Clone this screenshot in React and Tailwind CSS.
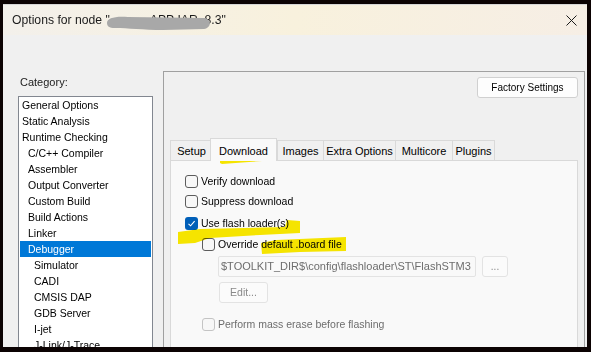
import React from "react";

const categories = [
  { label: "General Options", level: 0 },
  { label: "Static Analysis", level: 0 },
  { label: "Runtime Checking", level: 0 },
  { label: "C/C++ Compiler", level: 1 },
  { label: "Assembler", level: 1 },
  { label: "Output Converter", level: 1 },
  { label: "Custom Build", level: 1 },
  { label: "Build Actions", level: 1 },
  { label: "Linker", level: 1 },
  { label: "Debugger", level: 1, selected: true },
  { label: "Simulator", level: 2 },
  { label: "CADI", level: 2 },
  { label: "CMSIS DAP", level: 2 },
  { label: "GDB Server", level: 2 },
  { label: "I-jet", level: 2 },
  { label: "J-Link/J-Trace", level: 2 },
];

const tabs = [
  { label: "Setup", w: "w-[42px]" },
  { label: "Download", w: "w-[67px]", selected: true },
  { label: "Images", w: "w-[46px]" },
  { label: "Extra Options", w: "w-[72px]" },
  { label: "Multicore", w: "w-[57px]" },
  { label: "Plugins", w: "w-[43px]" },
];

const indent = ["pl-[3px]", "pl-[9px]", "pl-[15px]"];

const Checkbox = ({ checked, disabled }) => {
  if (checked) {
    return (
      <span className="w-[13px] h-[13px] rounded-[3px] bg-[#005fb8] flex items-center justify-center shrink-0">
        <svg width="9" height="9" viewBox="0 0 9 9">
          <path d="M1.5 4.8 L3.6 6.8 L7.6 2.2" fill="none" stroke="#fff" strokeWidth="1.1" />
        </svg>
      </span>
    );
  }
  return (
    <span
      className={
        "w-[13px] h-[13px] rounded-[3px] border bg-[#f7f7f7] shrink-0 " +
        (disabled ? "border-[#c4c4c4]" : "border-[#5c5c5c]")
      }
    />
  );
};

const Option = ({ label, checked, disabled, className = "" }) => (
  <div className={"flex items-center gap-[3px] h-[13px] " + className}>
    <Checkbox checked={checked} disabled={disabled} />
    <span className={"text-[10.5px] leading-[13px] " + (disabled ? "text-[#6d6d6d]" : "text-black")}>{label}</span>
  </div>
);

// highlighter strokes drawn over the screenshot
const Marks = () => (
  <svg
    className="absolute inset-0 pointer-events-none mix-blend-multiply"
    width="591"
    height="352"
    viewBox="0 0 591 352"
  >
    <g fill="#fbea00">
      <polygon points="220,149 223,148 224,156 262,152 270,149 270,159 262,161 222,164 220,163" />
      <polygon points="178,232 200,229 285,227 287,220 300,221 300,233 260,235 210,238 195,243 178,244" />
      <polygon points="261,243 276,240 346,237 346,251 300,252 262,254" />
    </g>
  </svg>
);

export default function App() {
  return (
    <div className="relative w-[591px] h-[352px] bg-[#0c0303] pt-[4px] pl-[3px] pr-[4px] pb-[5px] overflow-hidden" style={{ fontFamily: '"Liberation Sans", Arial, sans-serif' }}>
      <div className="w-full h-full flex flex-col bg-[#f0f0f0] overflow-hidden border-t border-[#d6d6d6]">
        {/* title bar */}
        <div className="relative h-[30px] shrink-0 flex items-center pl-[9px] pr-[6px] bg-gradient-to-r from-[#f3f0eb] via-[#f8f1dd] to-[#f6eee5]">
          <span className="text-[12.2px] text-[#1b1b1b] whitespace-nowrap">
            Options for node &quot;<span className="inline-block w-[40px]" />APP IAR_8.3&quot;
          </span>
          <svg className="absolute left-[100px] top-[9px]" width="112" height="18" viewBox="100 13 112 18">
            <path
              d="M104,22 C104,17 112,15 125,16 L200,17 C209,17 209,27 201,28 L160,29 C140,29 125,27 112,27 C106,27 104,25 104,22 Z"
              fill="#a8a8a8"
            />
          </svg>
          <svg className="ml-auto mr-[4px]" width="11" height="11" viewBox="0 0 11 11">
            <path d="M0.5 0.5 L10.5 10.5 M10.5 0.5 L0.5 10.5" stroke="#1a1a1a" strokeWidth="1" />
          </svg>
        </div>

        {/* body */}
        <div className="flex-1 flex items-start pl-[15px] pr-[2px] min-h-0">
          <div className="w-[135px] shrink-0 pt-[39px] flex flex-col">
            <div className="h-[16px] leading-[16px] text-[11px] text-[#1b1b1b] pl-[2px]">Category:</div>
            <div className="mt-[6px] border border-[#828790] bg-white h-[300px] overflow-hidden">
              {categories.map((c) =>
                c.selected ? (
                  <div key={c.label} className="h-[16px] leading-[16px] mx-[1px] pl-[8px] bg-[#0078d7] text-white text-[10.5px]">
                    {c.label}
                  </div>
                ) : (
                  <div key={c.label} className={"h-[16px] leading-[16px] text-[10.5px] text-black " + indent[c.level]}>
                    {c.label}
                  </div>
                )
              )}
            </div>
          </div>

          <div className="ml-[10px] mt-[36px] flex-1 h-[300px] border border-[#a0a0a0] px-[6px] pt-[5px] flex flex-col">
            <div className="flex justify-end">
              <div className="w-[101px] h-[21px] rounded-[3px] border border-[#d0d0d0] bg-[#fdfdfd] flex items-center justify-center text-[10px] text-black">
                Factory Settings
              </div>
            </div>

            <div className="mt-[40px] flex items-end h-[22px] relative z-10">
              {tabs.map((t, i) =>
                t.selected ? (
                  <div
                    key={t.label}
                    className={"h-[23px] -mb-[1px] -mx-[2px] border border-b-0 border-[#d9d9d9] bg-[#f9f9f9] flex items-start justify-center pt-[4px] text-[11px] text-black " + t.w}
                  >
                    {t.label}
                  </div>
                ) : (
                  <div
                    key={t.label}
                    className={
                      "h-[20px] pt-[1px] border-t border-l border-[#d9d9d9] bg-[#f0f0f0] flex items-center justify-center text-[11px] text-black " +
                      t.w +
                      (i === tabs.length - 1 ? " border-r" : "") +
                      (i === 2 ? " ml-[2px]" : "")
                    }
                  >
                    {t.label}
                  </div>
                )
              )}
            </div>

            <div className="flex-1 border border-[#d9d9d9] bg-[#f9f9f9] pl-[14px] pt-[14px] flex flex-col">
              <Option label="Verify download" />
              <Option label="Suppress download" className="mt-[7px]" />
              <Option label="Use flash loader(s)" checked className="mt-[9px]" />
              <Option label="Override default .board file" className="mt-[8px] ml-[17px] gap-[2px]" />
              <div className="mt-[5px] ml-[33px] flex items-center gap-[6px]">
                <div className="w-[258px] h-[21px] border border-[#e3e3e3] bg-[#f9f9f9] rounded-[2px] px-[2px] overflow-hidden whitespace-nowrap text-[11px] leading-[19px] text-[#6d6d6d]">
                  {"$TOOLKIT_DIR$\\config\\flashloader\\ST\\FlashSTM3"}
                </div>
                <div className="w-[26px] h-[21px] border border-[#e3e3e3] bg-[#fbfbfb] rounded-[3px] flex items-center justify-center text-[10px] text-[#8a8a8a]">
                  ...
                </div>
              </div>
              <div className="mt-[5px] ml-[34px] w-[49px] h-[21px] border border-[#e3e3e3] bg-[#fbfbfb] rounded-[3px] flex items-center justify-center text-[10.5px] text-[#8a8a8a]">
                Edit...
              </div>
              <Option label="Perform mass erase before flashing" disabled className="mt-[15px] ml-[17px] gap-[3px]" />
            </div>
          </div>
        </div>
      </div>
      <Marks />
    </div>
  );
}
